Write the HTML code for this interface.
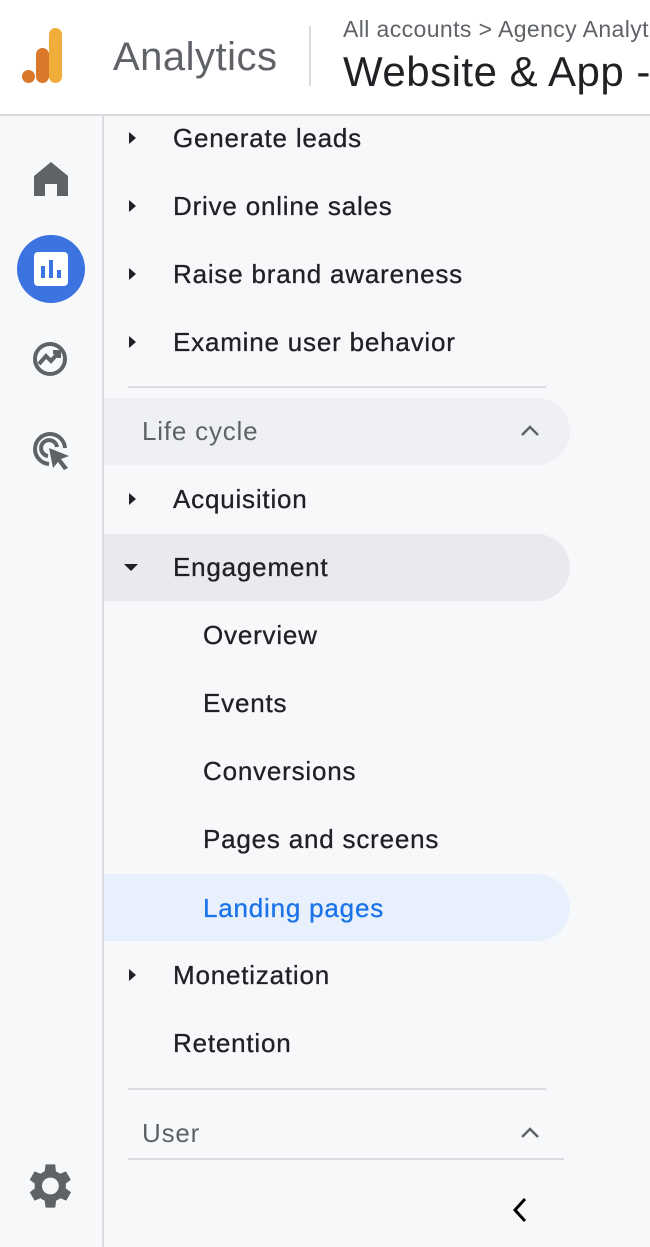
<!DOCTYPE html>
<html><head><meta charset="utf-8"><style>
*{margin:0;padding:0;box-sizing:border-box}
body{width:650px;height:1247px;overflow:hidden;background:#f7f8fa;font-family:"Liberation Sans",Arial,sans-serif;position:relative;color:#202124}
.hdr{position:absolute;left:0;top:0;width:650px;height:116px;background:#fff;border-bottom:2px solid #dadce0;overflow:hidden}
.rail{position:absolute;left:102px;top:116px;width:2px;height:1131px;background:#dadce0}
.t{position:absolute;font-size:26px;line-height:30px;white-space:nowrap;letter-spacing:0.8px;-webkit-text-stroke:0.3px currentColor}
.arr{position:absolute;left:129px;width:0;height:0;border-top:6px solid transparent;border-bottom:6px solid transparent;border-left:7px solid #202124}
.pill{position:absolute;left:104px;width:466px;height:67px;border-radius:0 34px 34px 0}
.div{position:absolute;height:2px;background:#dadce0}
</style></head><body>
<div class="hdr">
 <svg style="position:absolute;left:22px;top:28px" width="54" height="56" viewBox="0 0 54 56">
  <rect x="27" y="0" width="13" height="55" rx="6.5" fill="#f0ad3a"/>
  <rect x="14" y="20" width="13" height="35" rx="6.5" fill="#d9772b"/>
  <circle cx="6.5" cy="48.5" r="6.5" fill="#d9772b"/>
 </svg>
 <div class="t" style="left:113px;top:35px;font-size:40px;line-height:44px;color:#5f6368;letter-spacing:0.5px;-webkit-text-stroke:0">Analytics</div>
 <div style="position:absolute;left:309px;top:26px;width:2px;height:60px;background:#dadce0"></div>
 <div class="t" style="left:343px;top:14px;font-size:23px;color:#5f6368;letter-spacing:0.4px;-webkit-text-stroke:0">All accounts &gt; Agency Analyt</div>
 <div class="t" style="left:343px;top:50px;font-size:42px;line-height:44px;color:#202124;letter-spacing:0.5px;-webkit-text-stroke:0">Website &amp; App -</div>
</div>
<div class="rail"></div>
<svg style="position:absolute;left:34px;top:162px" width="34" height="34" viewBox="0 0 34 34"><path d="M17 0 L34 14 V34 H23 V22 H11 V34 H0 V14 Z" fill="#5f6368"/></svg>
<div style="position:absolute;left:17px;top:235px;width:68px;height:68px;border-radius:50%;background:#3b73e0"></div>
<svg style="position:absolute;left:34px;top:252px" width="34" height="34" viewBox="0 0 34 34"><rect x="0" y="0" width="34" height="34" rx="4" fill="#fff"/><rect x="7" y="14" width="4" height="12" fill="#3b73e0"/><rect x="15" y="8" width="4" height="18" fill="#3b73e0"/><rect x="23" y="18" width="4" height="8" fill="#3b73e0"/></svg>
<svg style="position:absolute;left:31px;top:340px" width="40" height="40" viewBox="0 0 40 40" fill="none" stroke="#5f6368" stroke-width="4"><circle cx="19" cy="19" r="15"/><path d="M8 24 L15 16 L20 21 L28 12 M22 12 H28 V18"/></svg>
<svg style="position:absolute;left:31px;top:430px" width="42" height="42" viewBox="0 0 42 42" fill="none" stroke="#5f6368" stroke-width="4"><path d="M18 34 A15 15 0 1 1 34 18"/><path d="M17 26 A8 8 0 1 1 26 17"/><path d="M18 18 L38 26 L30 29 L37 38 L33 40 L27 32 L22 38 Z" fill="#5f6368" stroke="none"/></svg>
<svg style="position:absolute;left:24px;top:1162px" width="48" height="48" viewBox="2 2 20 20"><path fill="#5f6368" d="M19.4 13a7.5 7.5 0 0 0 0-2l2.1-1.6-2-3.5-2.5 1a7 7 0 0 0-1.7-1L15 3h-4l-.4 2.9a7 7 0 0 0-1.7 1l-2.5-1-2 3.5L6.5 11a7.5 7.5 0 0 0 0 2l-2.1 1.6 2 3.5 2.5-1a7 7 0 0 0 1.7 1L11 21h4l.4-2.9a7 7 0 0 0 1.7-1l2.5 1 2-3.5zM13 15.5A3.5 3.5 0 1 1 13 8.5a3.5 3.5 0 0 1 0 7z"/></svg>
<div class="pill" style="top:398px;background:#eef0f3"></div>
<div class="pill" style="top:534px;background:#e8eaed"></div>
<div class="pill" style="top:874px;background:#e8f0fe"></div>
<div class="arr" style="top:132px"></div><div class="t" style="left:173px;top:123px">Generate leads</div>
<div class="arr" style="top:200px"></div><div class="t" style="left:173px;top:191px">Drive online sales</div>
<div class="arr" style="top:268px"></div><div class="t" style="left:173px;top:259px">Raise brand awareness</div>
<div class="arr" style="top:336px"></div><div class="t" style="left:173px;top:327px">Examine user behavior</div>
<div class="div" style="left:128px;top:386px;width:418px"></div>
<div class="t" style="left:142px;top:416px;color:#5f6368;-webkit-text-stroke:0">Life cycle</div>
<svg style="position:absolute;left:520px;top:424px" width="20" height="14" viewBox="0 0 20 14"><path d="M2 11 L10 3 L18 11" fill="none" stroke="#5f6368" stroke-width="2.5"/></svg>
<div class="arr" style="top:493px"></div><div class="t" style="left:173px;top:484px">Acquisition</div>
<div style="position:absolute;left:124px;top:564px;width:0;height:0;border-left:7px solid transparent;border-right:7px solid transparent;border-top:7px solid #202124"></div>
<div class="t" style="left:173px;top:552px">Engagement</div>
<div class="t" style="left:203px;top:620px">Overview</div>
<div class="t" style="left:203px;top:688px">Events</div>
<div class="t" style="left:203px;top:756px">Conversions</div>
<div class="t" style="left:203px;top:824px">Pages and screens</div>
<div class="t" style="left:203px;top:893px;color:#1a73e8">Landing pages</div>
<div class="arr" style="top:969px"></div><div class="t" style="left:173px;top:960px">Monetization</div>
<div class="t" style="left:173px;top:1028px">Retention</div>
<div class="div" style="left:128px;top:1088px;width:418px"></div>
<div class="t" style="left:142px;top:1118px;color:#5f6368;-webkit-text-stroke:0">User</div>
<svg style="position:absolute;left:520px;top:1126px" width="20" height="14" viewBox="0 0 20 14"><path d="M2 11 L10 3 L18 11" fill="none" stroke="#5f6368" stroke-width="2.5"/></svg>
<div class="div" style="left:128px;top:1158px;width:436px"></div>
<svg style="position:absolute;left:510px;top:1196px" width="20" height="28" viewBox="0 0 20 28"><path d="M15 3 L5 14 L15 25" fill="none" stroke="#000" stroke-width="3"/></svg>
</body></html>
